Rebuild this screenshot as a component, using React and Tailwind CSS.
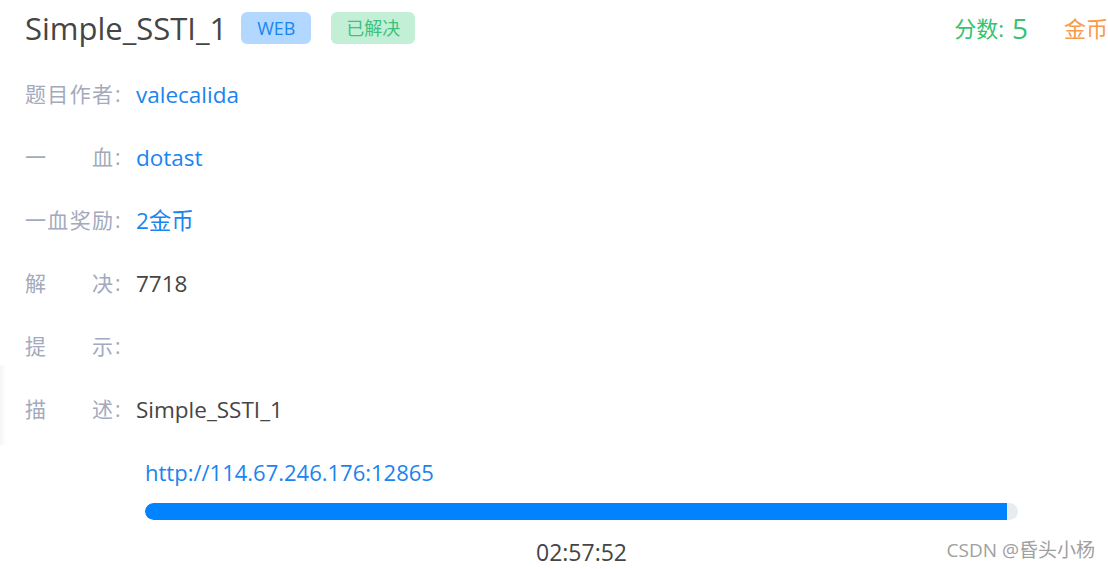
const rows = [
  { label: ["题", "目", "作", "者"], value: "valecalida", tone: "link" },
  { label: ["一", "血"], value: "dotast", tone: "link" },
  { label: ["一", "血", "奖", "励"], value: "2金币", tone: "link" },
  { label: ["解", "决"], value: "7718", tone: "text" },
  { label: ["提", "示"], value: "", tone: "text" },
  { label: ["描", "述"], value: "Simple_SSTI_1", tone: "text" },
];

function Row({ label, value, tone }) {
  return (
    <div className="flex h-[63px] items-center">
      <div className="flex w-[111px] shrink-0 items-center text-[21px] text-[#a3aabd]">
        <div className="flex w-[88px] justify-between">
          {label.map((c, i) => (
            <span key={i}>{c}</span>
          ))}
        </div>
        <span className="ml-[2px]">:</span>
      </div>
      <span className={"text-[22.5px] " + (tone === "link" ? "text-[#1a84f0]" : "text-[#454545]")}>{value}</span>
    </div>
  );
}

export default function App() {
  return (
    <div
      className="relative h-[569px] w-[1108px] overflow-hidden bg-white pl-[25px]"
      style={{ fontFamily: '"Open Sans", "Noto Sans CJK SC", sans-serif' }}
    >
      {/* faint shadow from neighbouring panel */}
      <div className="absolute left-0 top-[365px] h-[80px] w-[6px] bg-gradient-to-r from-[#f5f5f5] to-white" />

      <div className="flex h-[56px] items-center justify-between">
        <div className="flex items-center">
          <h1 className="text-[31px] text-[#454545]">Simple_SSTI_1</h1>
          <span className="ml-[14px] flex h-[32px] w-[70px] items-center justify-center rounded-[6px] bg-[#b3d8ff] text-[18px] text-[#1a84f0]">
            WEB
          </span>
          <span className="ml-[20px] flex h-[32px] w-[84px] items-center justify-center rounded-[6px] bg-[#c2efd6] text-[18px] text-[#3cc27a]">
            已解决
          </span>
        </div>
        <div className="flex items-center">
          <span className="text-[22px] text-[#33c46f]">分数:</span>
          <span className="ml-[8px] text-[28px] text-[#33c46f]">5</span>
          <span className="ml-[36px] text-[22px] text-[#f79a4c]">金币</span>
        </div>
      </div>

      <div className="mt-[7px] flex flex-col">
        {rows.map((r, i) => (
          <Row key={i} {...r} />
        ))}
      </div>

      <div className="ml-[120px] w-[873px]">
        <div className="mt-[16px] flex h-[30px] items-center text-[22px] text-[#1a84f0]">
          http://114.67.246.176:12865
        </div>
        <div className="mt-[16px] h-[17px] w-full overflow-hidden rounded-full bg-[#e9ecef]">
          <div className="h-full rounded-l-full bg-[#0083ff]" style={{ width: "98.7%" }} />
        </div>
        <div className="mt-[19px] flex h-[26px] items-center justify-center text-[23px] leading-[26px] text-[#454545]">
          02:57:52
        </div>
      </div>

      <div className="absolute bottom-[5px] right-[13px] text-[19px] text-[#a0a0a0]">
        CSDN @昏头小杨
      </div>
    </div>
  );
}
